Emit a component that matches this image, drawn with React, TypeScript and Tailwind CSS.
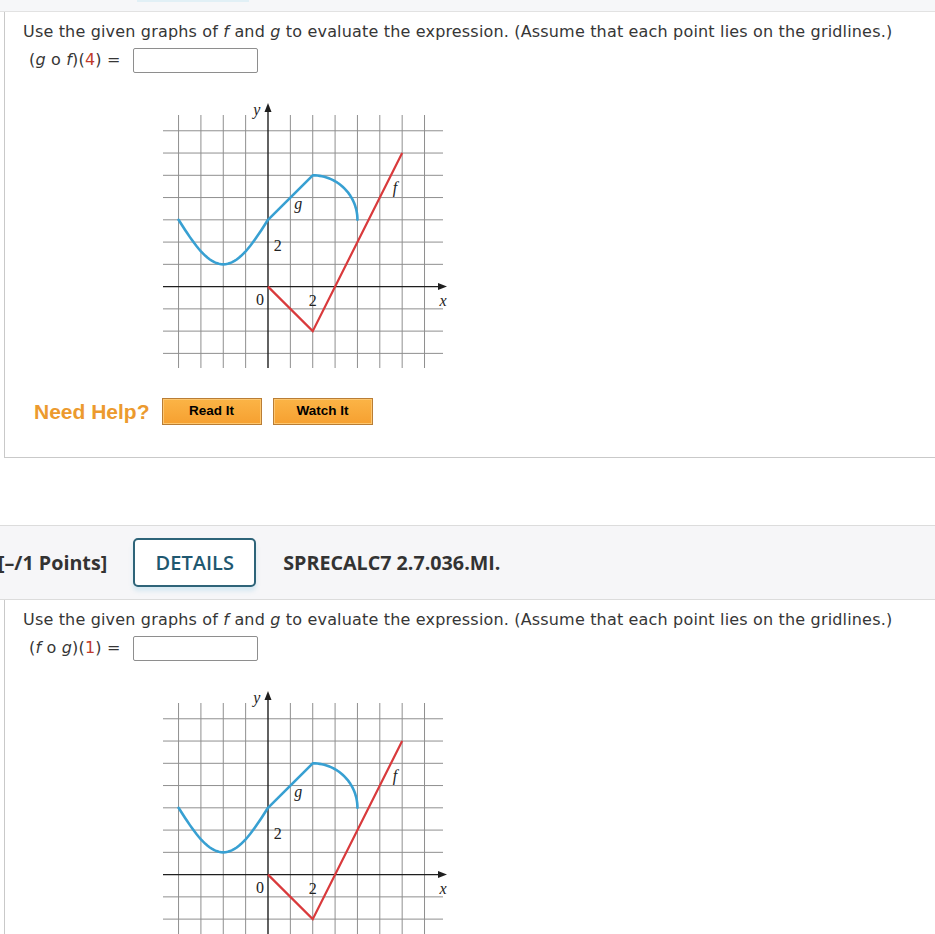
import React from "react";

const OX = 118;
const OY = 191.6;
const UX = 22.36;
const UY = 22.26;
const X = (v: number) => OX + v * UX;
const Y = (v: number) => OY - v * UY;

function gPath() {
  const pts: string[] = [];
  for (let i = 0; i <= 40; i++) {
    const x = -4 + (i / 40) * 4;
    const y = 3 - 2 * Math.sin((Math.PI * (x + 4)) / 4);
    pts.push(`${X(x).toFixed(2)},${Y(y).toFixed(2)}`);
  }
  pts.push(`${X(2).toFixed(2)},${Y(5).toFixed(2)}`);
  for (let i = 1; i <= 30; i++) {
    const a = Math.PI / 2 - (i / 30) * (Math.PI / 2);
    const x = 2 + 2 * Math.cos(a);
    const y = 3 + 2 * Math.sin(a);
    pts.push(`${X(x).toFixed(2)},${Y(y).toFixed(2)}`);
  }
  return "M" + pts.join(" L");
}

function Graph() {
  const verticals = [-4, -3, -2, -1, 1, 2, 3, 4, 5, 6, 7];
  const horizontals = [-3, -2, -1, 1, 2, 3, 4, 5, 6, 7];
  return (
    <svg width="300" height="280" viewBox="0 0 300 280" className="block">
      {verticals.map((v) => (
        <line key={"v" + v} x1={X(v)} x2={X(v)} y1={20} y2={273} stroke="#8f8f8f" strokeWidth="1" />
      ))}
      {horizontals.map((h) => (
        <line key={"h" + h} x1={13} x2={293} y1={Y(h)} y2={Y(h)} stroke="#8f8f8f" strokeWidth="1" />
      ))}
      {/* axes */}
      <line x1={13} x2={292} y1={OY} y2={OY} stroke="#1f1f1f" strokeWidth="1.4" />
      <polygon points={`297,${OY} 288,${OY - 3.5} 288,${OY + 3.5}`} fill="#1f1f1f" />
      <line x1={OX} x2={OX} y1={273} y2={14} stroke="#1f1f1f" strokeWidth="1.4" />
      <polygon points={`${OX},8 ${OX - 3.5},17 ${OX + 3.5},17`} fill="#1f1f1f" />

      <path d={gPath()} fill="none" stroke="#38a0d2" strokeWidth="2.6" strokeLinejoin="round" strokeLinecap="round" />
      <polyline
        points={`${X(0)},${Y(0)} ${X(2)},${Y(-2)} ${X(6)},${Y(6)}`}
        fill="none"
        stroke="#d93a3c"
        strokeWidth="2.2"
        strokeLinejoin="miter"
      />

      <g fontFamily="'Liberation Serif', 'DejaVu Serif', serif" fontSize="16" fill="#222">
        <text x="106.7" y="20" textAnchor="middle" fontStyle="italic">y</text>
        <text x="110" y="209.5" textAnchor="middle">0</text>
        <text x="162.7" y="210.5" textAnchor="middle">2</text>
        <text x="127.7" y="155.5" textAnchor="middle">2</text>
        <text x="148.3" y="114" textAnchor="middle" fontStyle="italic">g</text>
        <text x="245" y="98" textAnchor="middle" fontStyle="italic">f</text>
        <text x="293" y="211" textAnchor="middle" fontStyle="italic">x</text>
      </g>
    </svg>
  );
}

const helpBtn =
  "h-[27px] w-[100px] border border-[#b97d35] bg-gradient-to-b from-[#fbb446] to-[#f6a030] shadow-[inset_0_0_0_1px_#fdc770] font-['Liberation_Sans',Arial,sans-serif] font-bold text-[13.5px] text-black";

function Card({ expr }: { expr: React.ReactNode }) {
  return (
    <div className="ml-[4px] border-l border-b border-[#c9c9c9] pt-[6px] pb-[32px]">
      <div className="pl-[18px] font-['DejaVu_Sans',Verdana,sans-serif] text-[16px] tracking-[0.17px] text-[#363636]">
        <div className="h-[28px] leading-[28px] whitespace-nowrap">
          Use the given graphs of <i>f</i> and <i>g</i> to evaluate the expression. (Assume that each point lies on the
          gridlines.)
        </div>
        <div className="h-[28px] flex items-center pl-[6px]">
          <span className="w-[104px] whitespace-nowrap">{expr}</span>
          <span className="w-[125px] h-[25px] border border-[#8e8e8e] rounded-[2px] bg-white" />
        </div>
      </div>
      <div className="mt-[21px] pl-[145px]">
        <Graph />
      </div>
      <div className="mt-[23px] h-[27px] flex items-center pl-[29px]">
        <span className="font-['Liberation_Sans',Arial,sans-serif] font-bold text-[21px] text-[#ec9a2e]">Need Help?</span>
        <button className={"ml-[12px] " + helpBtn}>Read It</button>
        <button className={"ml-[11px] " + helpBtn}>Watch It</button>
      </div>
    </div>
  );
}

export default function App() {
  return (
    <div className="h-[934px] w-[935px] overflow-hidden bg-white">
      <div className="h-[12px] border-b border-[#e2e2e2] bg-[#f6f7f9]">
        <div className="ml-[137px] w-[112px] h-[2px] bg-[#e1f0f6]" />
      </div>
      <Card
        expr={
          <>
            (<i>g</i> o <i>f</i>)(<span className="text-[#c0392b]">4</span>) =
          </>
        }
      />
      <div className="h-[67px]" />
      <div className="h-[75px] border-y border-[#dcdcdc] bg-[#f6f6f8] flex items-center font-['Open_Sans',sans-serif] text-[19.7px] font-bold text-[#333]">
        <span className="-ml-[2px] whitespace-nowrap">[–/1 Points]</span>
        <span className="ml-[26px] w-[123px] h-[49px] border-2 border-[#2e6479] rounded-[5px] bg-white flex items-center justify-center text-[#1f5870] font-semibold text-[20px] shadow-[0_4px_4px_rgba(120,190,225,0.25)]">
          DETAILS
        </span>
        <span className="ml-[27px] whitespace-nowrap">SPRECALC7 2.7.036.MI.</span>
      </div>
      <Card
        expr={
          <>
            (<i>f</i> o <i>g</i>)(<span className="text-[#c0392b]">1</span>) =
          </>
        }
      />
    </div>
  );
}
